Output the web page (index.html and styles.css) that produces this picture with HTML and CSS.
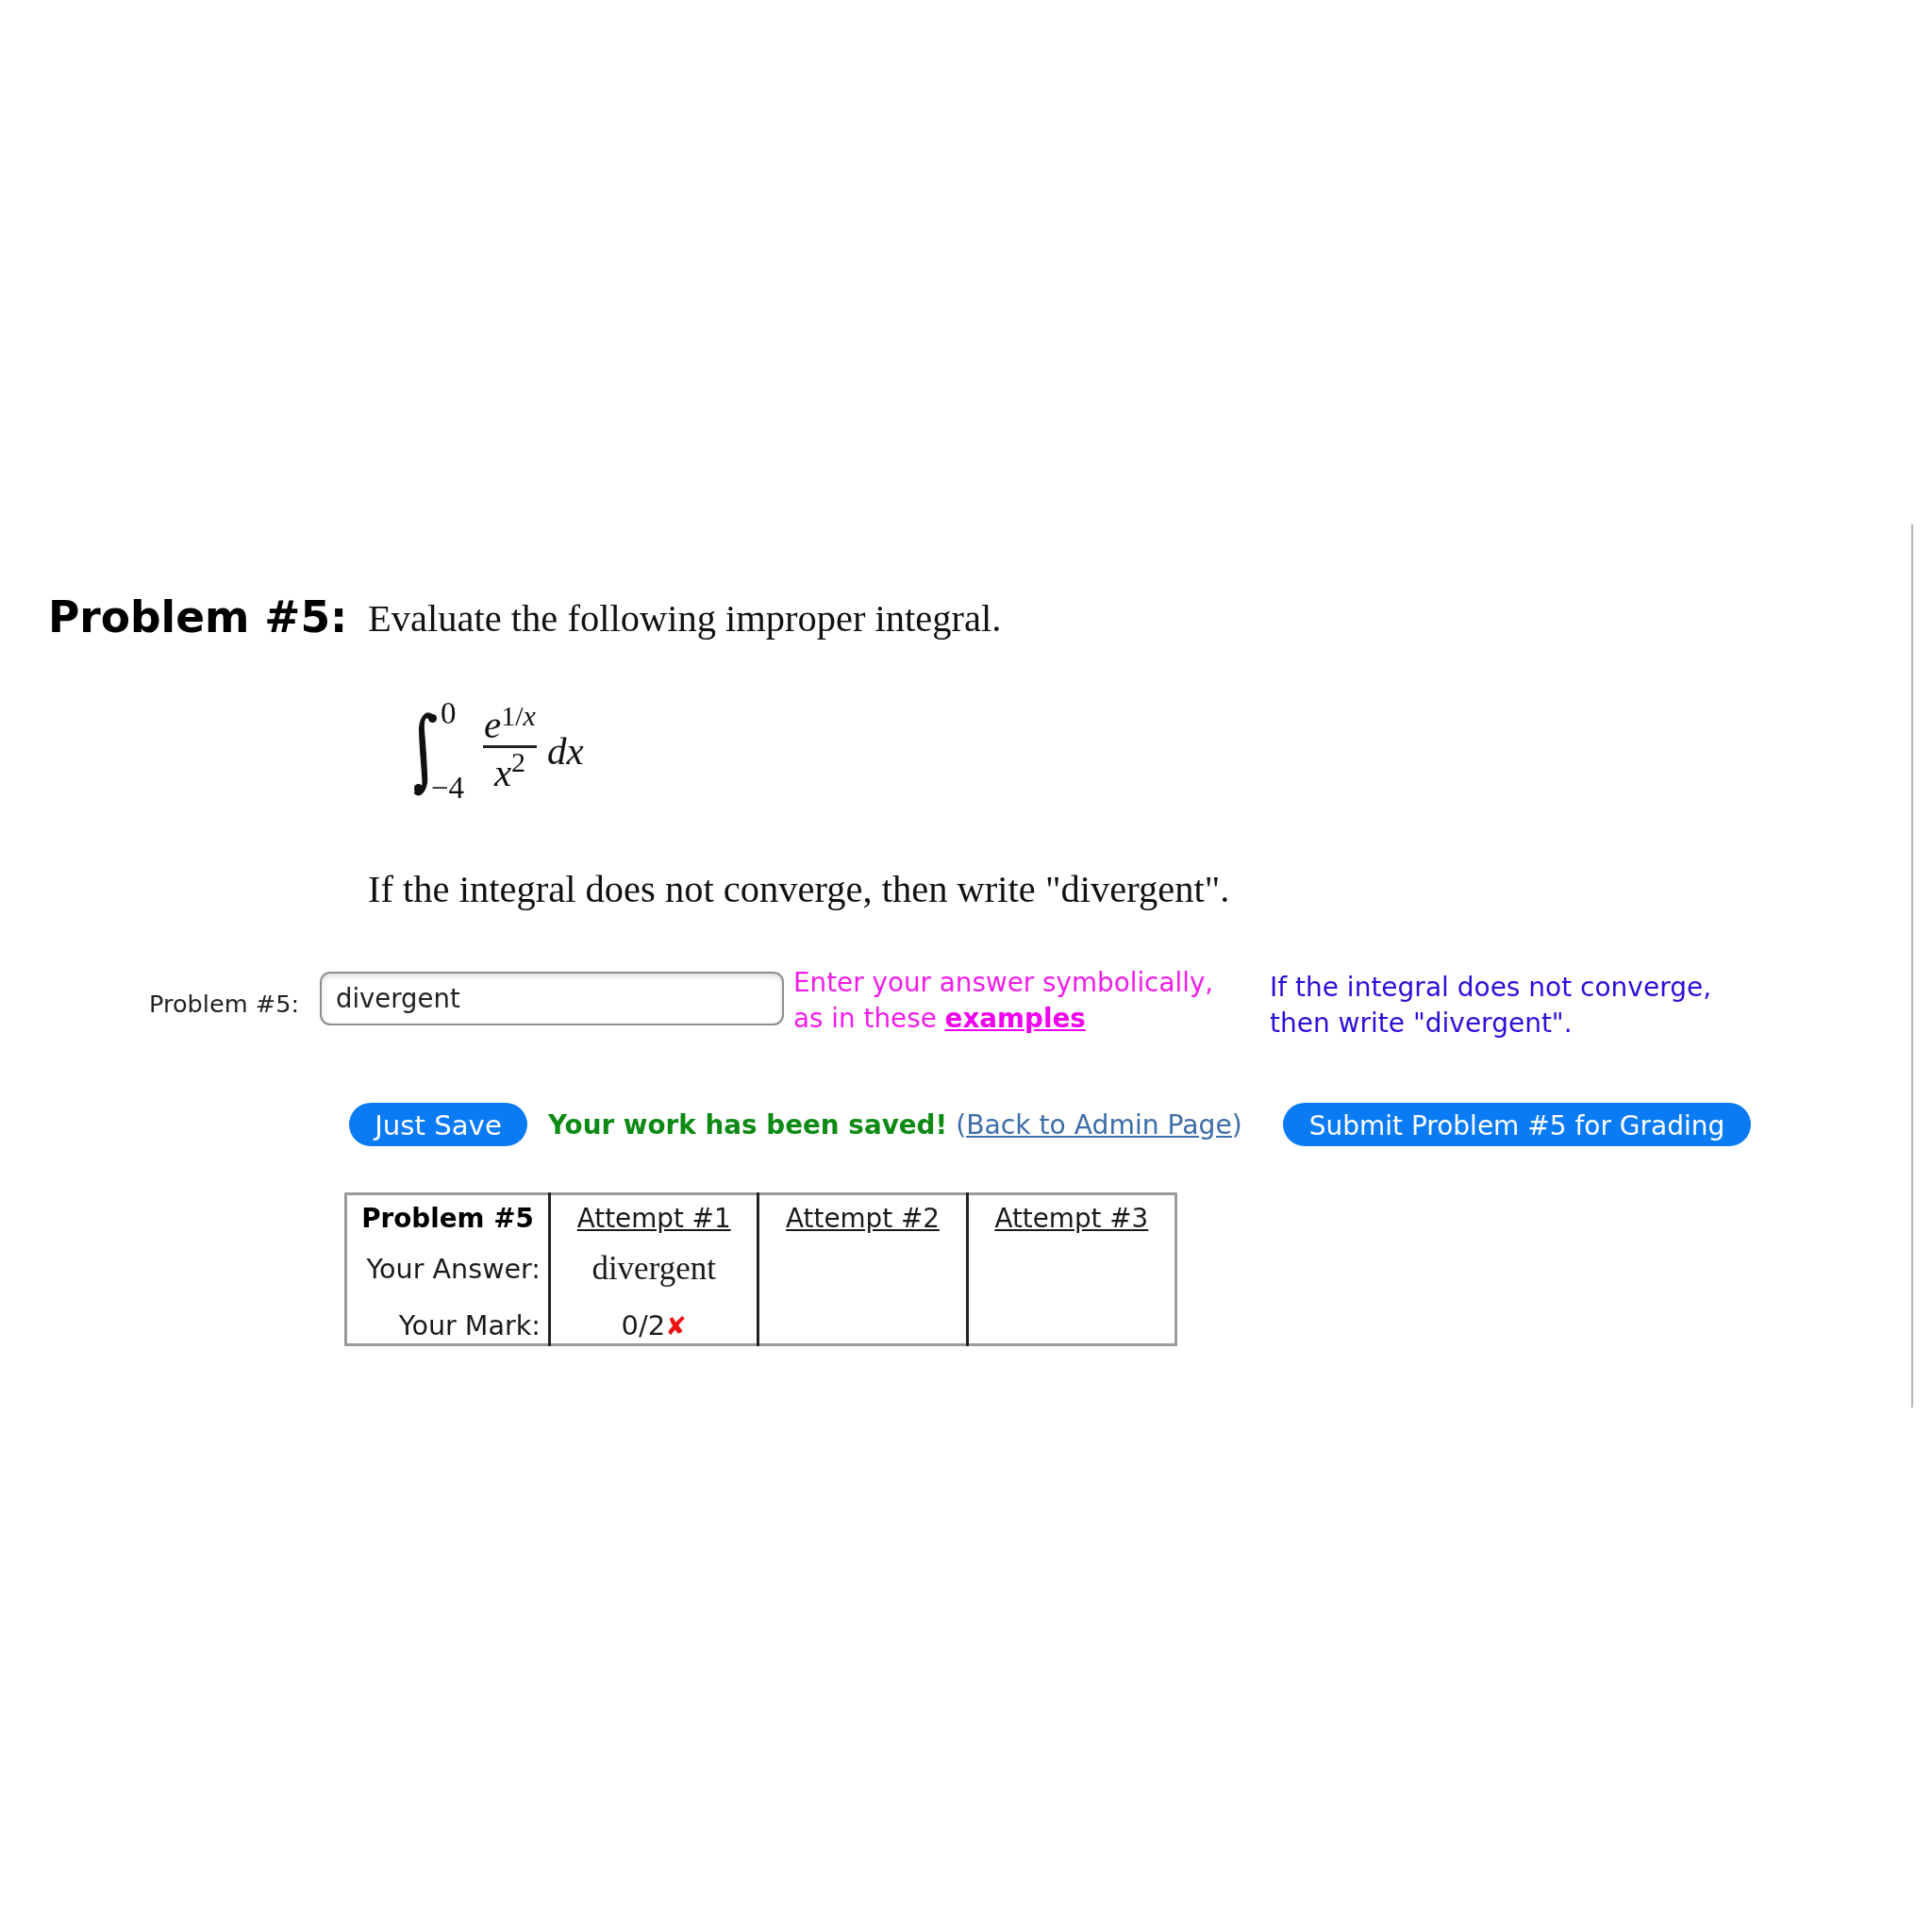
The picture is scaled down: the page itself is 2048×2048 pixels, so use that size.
FILE: index.html
```html
<!DOCTYPE html>
<html lang="en">
<head>
<meta charset="utf-8">
<title>Problem #5</title>
<link rel="stylesheet" href="styles.css">
</head>
<body>
<main class="page">
  <section class="problem">
    <h1 class="problem-title">Problem #5:</h1>
    <div class="statement">
      <p class="statement-text">Evaluate the following improper integral.</p>
      <div class="math">
        <span class="integral"><span class="integral-glyph">∫</span></span>
        <span class="limits"><span class="limit-upper">0</span><span>−4</span></span>
        <span class="fraction">
          <span class="numerator"><i>e</i><sup>1/<i>x</i></sup></span>
          <span class="denominator"><i>x</i><sup>2</sup></span>
        </span>
        <i class="differential">dx</i>
      </div>
      <p class="statement-text">If the integral does not converge, then write "divergent".</p>
    </div>
  </section>

  <section class="answer-row">
    <label class="answer-label" for="answer">Problem #5:</label>
    <input class="answer-input" id="answer" type="text" value="divergent">
    <p class="hint-symbolic">Enter your answer symbolically,<br>as in these <a href="#">examples</a></p>
    <p class="hint-divergent">If the integral does not converge,<br>then write "divergent".</p>
  </section>

  <section class="actions">
    <button class="pill pill-save" type="button">Just Save</button>
    <p class="status"><strong>Your work has been saved!</strong> (<a href="#">Back to Admin Page</a>)</p>
    <button class="pill pill-submit" type="button">Submit Problem #5 for Grading</button>
  </section>

  <table class="attempts">
    <tr class="row-top">
      <th class="row-head">Problem #5</th>
      <td class="attempt-head">Attempt #1</td>
      <td class="attempt-head">Attempt #2</td>
      <td class="attempt-head">Attempt #3</td>
    </tr>
    <tr class="row-answer">
      <td class="row-label">Your Answer:</td>
      <td class="answer-cell">divergent</td>
      <td></td>
      <td></td>
    </tr>
    <tr class="row-mark">
      <td class="row-label">Your Mark:</td>
      <td class="mark-cell">0/2<b class="cross">✘</b></td>
      <td></td>
      <td></td>
    </tr>
  </table>
</main>
</body>
</html>
```
FILE: styles.css
```css
html, body {
  margin: 0;
  background: #fff;
}
body {
  font-family: "DejaVu Sans", Verdana, sans-serif;
  color: #000;
}
p, h1 { margin: 0; }
.page {
  box-sizing: border-box;
  width: 2028px;
  height: 936px;
  margin-top: 556px;
  padding-top: 72px;
  border-right: 2px solid #b4b4b4;
  filter: blur(.5px);
}
.problem {
  display: flex;
  align-items: flex-start;
  padding-left: 51px;
}
.problem-title {
  width: 339px;
  font-size: 45.5px;
  line-height: 54px;
  font-weight: 700;
}
.statement {
  padding-top: 1px;
}
.statement-text {
  font-family: "Liberation Serif", "Times New Roman", serif;
  font-size: 40.5px;
  line-height: 54px;
  color: #111;
}
.math {
  display: flex;
  align-items: flex-start;
  height: 111px;
  margin: 59px 0 63px 50px;
  font-family: "Liberation Serif", serif;
  font-size: 41px;
  color: #111;
}
.integral {
  position: relative;
  width: 17px;
  height: 111px;
}
.integral-glyph {
  position: absolute;
  left: -4px;
  top: 0;
  font-size: 88px;
  line-height: 96px;
  -webkit-text-stroke: 1.6px #111;
  transform: skewX(4deg) scaleX(.72);
  transform-origin: 50% 50%;
}
.integral::before,
.integral::after {
  content: "";
  position: absolute;
  width: 9px;
  height: 9px;
  border-radius: 50%;
  background: #111;
}
.integral::before { left: 14px; top: 15px; }
.integral::after { left: -1px; top: 89px; }
.limits {
  display: flex;
  flex-direction: column;
  justify-content: space-between;
  height: 109px;
  width: 55px;
  margin-top: -1px;
  font-size: 33px;
  line-height: 30px;
}
.limit-upper { padding-left: 10px; }
.fraction {
  display: flex;
  flex-direction: column;
  align-items: center;
  width: 57px;
  margin: 4px 11px 0 0;
}
.numerator {
  display: block;
  width: 100%;
  text-align: center;
  white-space: nowrap;
  border-bottom: 3px solid #222;
  line-height: 44px;
}
.denominator {
  margin-top: 3px;
  line-height: 46px;
}
.fraction sup {
  font-size: 30px;
  line-height: 0;
  vertical-align: 13px;
}
.denominator sup { vertical-align: 15px; }
.differential {
  margin-top: 31px;
  line-height: 46px;
}
.answer-row {
  display: flex;
  margin-top: 52px;
  padding-left: 158px;
  font-size: 28px;
  line-height: 38px;
}
.answer-label {
  width: 181px;
  padding-top: 23px;
  font-size: 25.6px;
  color: #222;
}
.answer-input {
  box-sizing: border-box;
  width: 492px;
  height: 57px;
  margin-top: 8px;
  padding: 0 15px 1px;
  border: 2px solid #8e8e8e;
  border-radius: 11px;
  background: #fff;
  box-shadow: inset 0 3px 5px rgba(0, 0, 0, .13);
  font: 27.5px "DejaVu Sans", sans-serif;
  color: #222;
}
.hint-symbolic {
  width: 505px;
  margin-left: 10px;
  padding-top: 1px;
  font-size: 27.8px;
  color: #f21de8;
}
.hint-symbolic a {
  color: #f000f0;
  font-weight: 700;
}
.hint-divergent {
  margin-top: 6px;
  color: #2a10d8;
}
.actions {
  display: flex;
  align-items: center;
  margin-top: 65px;
  padding-left: 370px;
  font-size: 28.2px;
}
.pill {
  height: 46px;
  padding: 2px 0 0;
  border: 0;
  border-radius: 23px;
  background: #0a7bf5;
  color: #fff;
  font: 28px "DejaVu Sans", sans-serif;
}
.pill-save { width: 189px; font-size: 29.2px; }
.pill-submit { width: 496px; }
.status {
  width: 801px;
  padding-left: 22px;
  box-sizing: border-box;
  white-space: nowrap;
  color: #3d6da8;
}
.status strong { color: #0c8a14; font-size: 27.8px; }
.status a { color: #3d6da8; }
.attempts {
  margin: 49px 0 0 365px;
  border-collapse: collapse;
  border: 3px solid #9a9a9a;
  font-size: 27.8px;
  color: #1a1a1a;
  table-layout: fixed;
  width: 883px;
}
.attempts th, .attempts td {
  padding: 0;
  border-left: 3px solid #222;
  text-align: center;
}
.attempts th { color: #000; }
.row-top > * { height: 49px; }
.row-answer > * { height: 58px; }
.attempts .row-mark > * { padding-top: 12px; box-sizing: border-box; height: 51px; }
.attempts tr > :first-child {
  width: 213px;
  border-left: 0;
}
.attempts td.row-label {
  text-align: right;
  padding-right: 8px;
  font-size: 28.6px;
}
.attempt-head { text-decoration: underline; }
.attempts td.answer-cell {
  font-family: "Liberation Serif", serif;
  font-size: 35px;
}
.mark-cell { font-size: 29px; }
.cross { color: #ee1111; font-size: 27px; }
```
